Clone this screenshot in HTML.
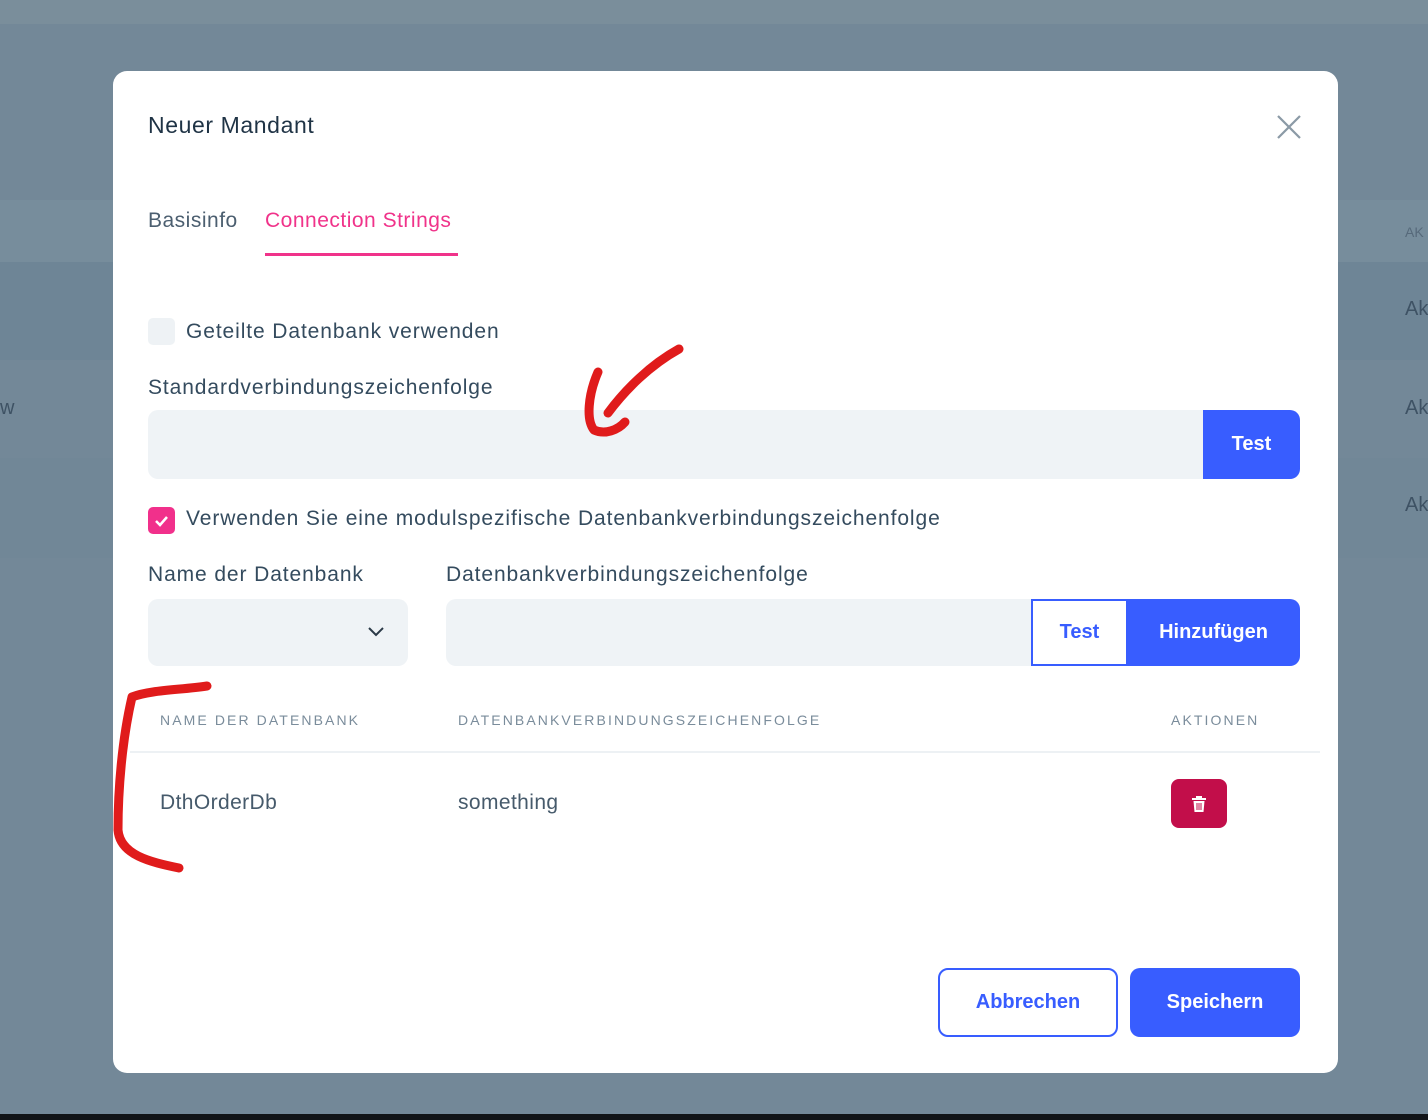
<!DOCTYPE html>
<html><head><meta charset="utf-8"><style>
*{box-sizing:border-box;margin:0;padding:0}
body{width:1428px;height:1120px;background:#738898;font-family:"Liberation Sans",sans-serif;position:relative;overflow:hidden;color:#344b5e}
.abs{position:absolute}
.band{position:absolute;left:0;width:1428px}
.modal{position:absolute;left:113px;top:71px;width:1225px;height:1002px;background:#fff;border-radius:14px}
.lbl{font-size:21px;letter-spacing:0.9px;color:#344b5e}
.inp{background:#eff3f6;border-radius:10px}
.btn{display:flex;align-items:center;justify-content:center;font-weight:bold;font-size:20px}
.th{font-size:14px;letter-spacing:2.1px;color:#7a8c9b}
</style></head><body>
<div class="band" style="top:0;height:24px;background:#7a8e9b"></div>
<div class="band" style="top:200px;height:62px;background:#778d9c"></div>
<div class="band" style="top:262px;height:98px;background:#6e8596"></div>
<div class="band" style="top:458px;height:100px;background:#718797"></div>
<div class="band" style="top:1114px;height:6px;background:#111418"></div>
<div class="abs" style="left:1405px;top:224px;font-size:14px;color:#56697a">AK</div>
<div class="abs" style="left:1405px;top:298px;font-size:20px;color:#3e5264">Ak</div>
<div class="abs" style="left:1405px;top:397px;font-size:20px;color:#3e5264">Ak</div>
<div class="abs" style="left:1405px;top:494px;font-size:20px;color:#3e5264">Ak</div>
<div class="abs" style="left:0;top:397px;font-size:20px;color:#3e5264">w</div>

<div class="modal">
 <div class="abs" style="left:35px;top:41px;font-size:23px;letter-spacing:0.6px;color:#1f3345">Neuer Mandant</div>
 <svg class="abs" style="left:1163px;top:43px" width="26" height="26" viewBox="0 0 26 26"><path d="M2 2L24 24M24 2L2 24" stroke="#8b9aa6" stroke-width="2.2"/></svg>
 <div class="abs" style="left:35px;top:138px;font-size:21px;letter-spacing:0.5px;color:#4c5f70">Basisinfo</div>
 <div class="abs" style="left:152px;top:138px;font-size:21px;letter-spacing:0.5px;color:#f0338a">Connection Strings</div>
 <div class="abs" style="left:152px;top:182px;width:193px;height:3px;background:#f0338a"></div>

 <div class="abs" style="left:35px;top:247px;width:27px;height:27px;border-radius:5px;background:#eef2f5"></div>
 <div class="abs lbl" style="left:73px;top:249px">Geteilte Datenbank verwenden</div>
 <div class="abs lbl" style="left:35px;top:305px">Standardverbindungszeichenfolge</div>
 <div class="abs inp" style="left:35px;top:339px;width:1070px;height:69px;border-radius:10px 0 0 10px"></div>
 <div class="abs btn" style="left:1090px;top:339px;width:97px;height:69px;background:#385dff;color:#fff;border-radius:0 10px 10px 0">Test</div>

 <div class="abs" style="left:35px;top:436px;width:27px;height:27px;border-radius:5px;background:#f1308b"><svg width="27" height="27"><path d="M8 14l4 4 7-8" stroke="#fff" stroke-width="2.5" fill="none"/></svg></div>
 <div class="abs lbl" style="left:73px;top:436px">Verwenden Sie eine modulspezifische Datenbankverbindungszeichenfolge</div>
 <div class="abs lbl" style="left:35px;top:492px">Name der Datenbank</div>
 <div class="abs lbl" style="left:333px;top:492px">Datenbankverbindungszeichenfolge</div>
 <div class="abs inp" style="left:35px;top:528px;width:260px;height:67px"></div>
 <svg class="abs" style="left:254px;top:555px" width="18" height="12"><path d="M2 2l7 7 7-7" stroke="#2b3a48" stroke-width="2" fill="none"/></svg>
 <div class="abs inp" style="left:333px;top:528px;width:600px;height:67px;border-radius:10px 0 0 10px"></div>
 <div class="abs btn" style="left:918px;top:528px;width:97px;height:67px;background:#fff;border:2px solid #385dff;color:#385dff">Test</div>
 <div class="abs btn" style="left:1014px;top:528px;width:173px;height:67px;background:#385dff;color:#fff;border-radius:0 10px 10px 0">Hinzufügen</div>

 <div class="abs th" style="left:47px;top:641px">NAME DER DATENBANK</div>
 <div class="abs th" style="left:345px;top:641px">DATENBANKVERBINDUNGSZEICHENFOLGE</div>
 <div class="abs th" style="left:1058px;top:641px">AKTIONEN</div>
 <div class="abs" style="left:17px;top:680px;width:1190px;height:2px;background:#edf1f4"></div>
 <div class="abs lbl" style="left:47px;top:720px;color:#465a6b;letter-spacing:0.4px">DthOrderDb</div>
 <div class="abs lbl" style="left:345px;top:720px;color:#465a6b;letter-spacing:0.4px">something</div>
 <div class="abs" style="left:1058px;top:708px;width:56px;height:49px;border-radius:8px;background:#c20e4a;display:flex;align-items:center;justify-content:center">
  <svg width="16" height="18" viewBox="0 0 16 18"><path d="M5 1h6v2H5z M1 3h14v2H1z M2.5 6h11l-1 11h-9z" fill="#fff"/><path d="M6 8v7M8 8v7M10 8v7" stroke="#c20e4a" stroke-width="1"/></svg>
 </div>

 <div class="abs btn" style="left:825px;top:897px;width:180px;height:69px;border:2px solid #385dff;border-radius:10px;color:#385dff;background:#fff">Abbrechen</div>
 <div class="abs btn" style="left:1017px;top:897px;width:170px;height:69px;border-radius:10px;background:#385dff;color:#fff">Speichern</div>
</div>

<svg class="abs" style="left:0;top:0" width="1428" height="1120">
 <g stroke="#e01b1b" stroke-width="9" fill="none" stroke-linecap="round" stroke-linejoin="round">
  <path d="M679 349C650 365 625 390 608 413"/>
  <path d="M598 372C588 395 586 420 594 430C605 435 618 430 625 422"/>
  <path d="M207 686C180 690 150 690 132 697C122 740 118 790 118 830C120 855 150 862 179 868"/>
 </g>
</svg>
</body></html>
